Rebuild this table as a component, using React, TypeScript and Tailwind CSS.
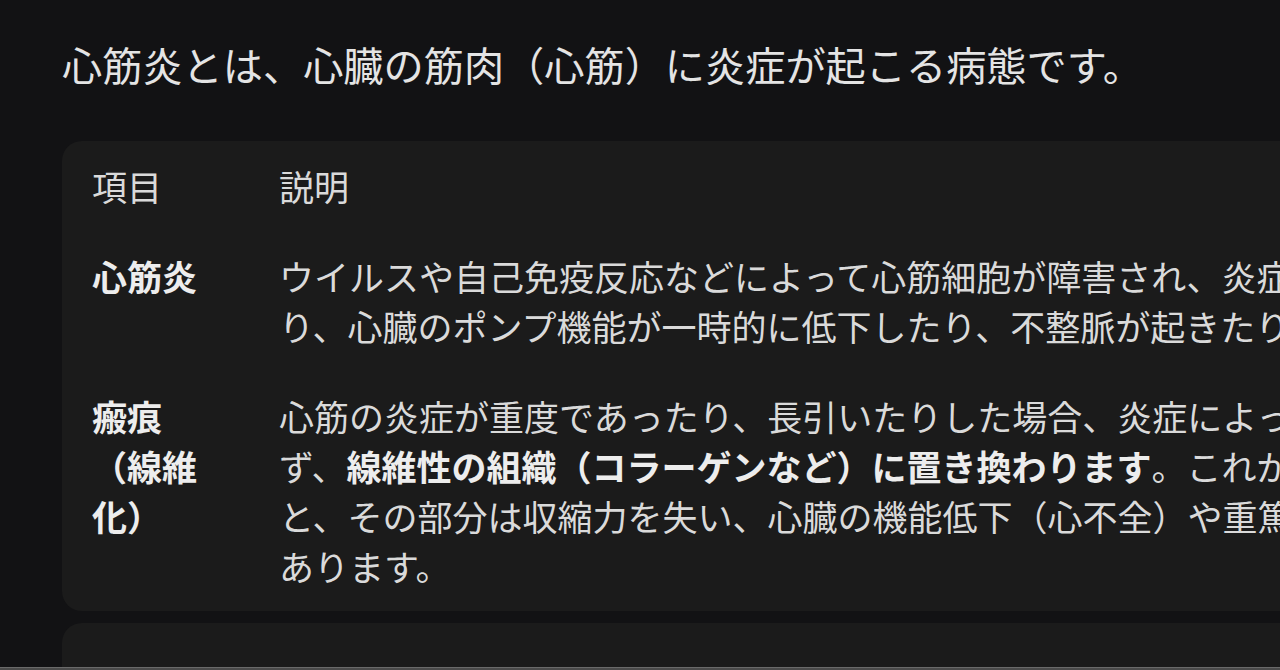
import React from "react";

const font = { fontFamily: '"Noto Sans CJK JP", "Noto Sans", sans-serif' };

export default function App() {
  return (
    <div
      className="w-[1280px] h-[670px] overflow-hidden bg-[#121214] flex flex-col"
      style={font}
    >
      <p className="pl-[62px] pt-[36px] text-[40.2px] leading-[56px] text-[#e4e4e4] whitespace-nowrap">
        心筋炎とは、心臓の筋肉（心筋）に炎症が起こる病態です。
      </p>
      <div className="mt-[49px] ml-[62px] w-[1400px] shrink-0 rounded-[20px] bg-[#1b1b1b] text-[35px] leading-[50px] text-[#dadada]">
        <div className="flex py-5">
          <div className="w-[217px] shrink-0 pl-[30px] pr-[67px]">項目</div>
          <div className="flex-1 whitespace-nowrap">説明</div>
        </div>
        <div className="flex py-5">
          <div className="w-[217px] shrink-0 pl-[30px] pr-[67px] font-bold text-[#ededed]">心筋炎</div>
          <div className="flex-1 whitespace-nowrap">
            ウイルスや自己免疫反応などによって心筋細胞が障害され、炎症が起こ
            <br />
            り、心臓のポンプ機能が一時的に低下したり、不整脈が起きたりします。
          </div>
        </div>
        <div className="flex py-5">
          <div className="w-[217px] shrink-0 pl-[30px] pr-[67px] font-bold text-[#ededed]">
            瘢痕（線維化）
          </div>
          <div className="flex-1 whitespace-nowrap">
            心筋の炎症が重度であったり、長引いたりした場合、炎症によって壊れた心筋細胞は元に戻ら
            <br />
            ず、
            <span className="font-bold text-[#ededed]">
              線維性の組織（コラーゲンなど）に置き換わります
            </span>
            。これが瘢痕です。瘢痕が広範囲に及ぶ
            <br />
            と、その部分は収縮力を失い、心臓の機能低下（心不全）や重篤な不整脈の原因となることが
            <br />
            あります。
          </div>
        </div>
      </div>
      <div className="mt-[12px] ml-[62px] w-[1400px] flex-1 rounded-t-[20px] bg-[#1b1b1b]" />
      <div className="h-[3px] shrink-0 border-t border-[#6a6a6a] bg-[#4a4a4a]" />
    </div>
  );
}
